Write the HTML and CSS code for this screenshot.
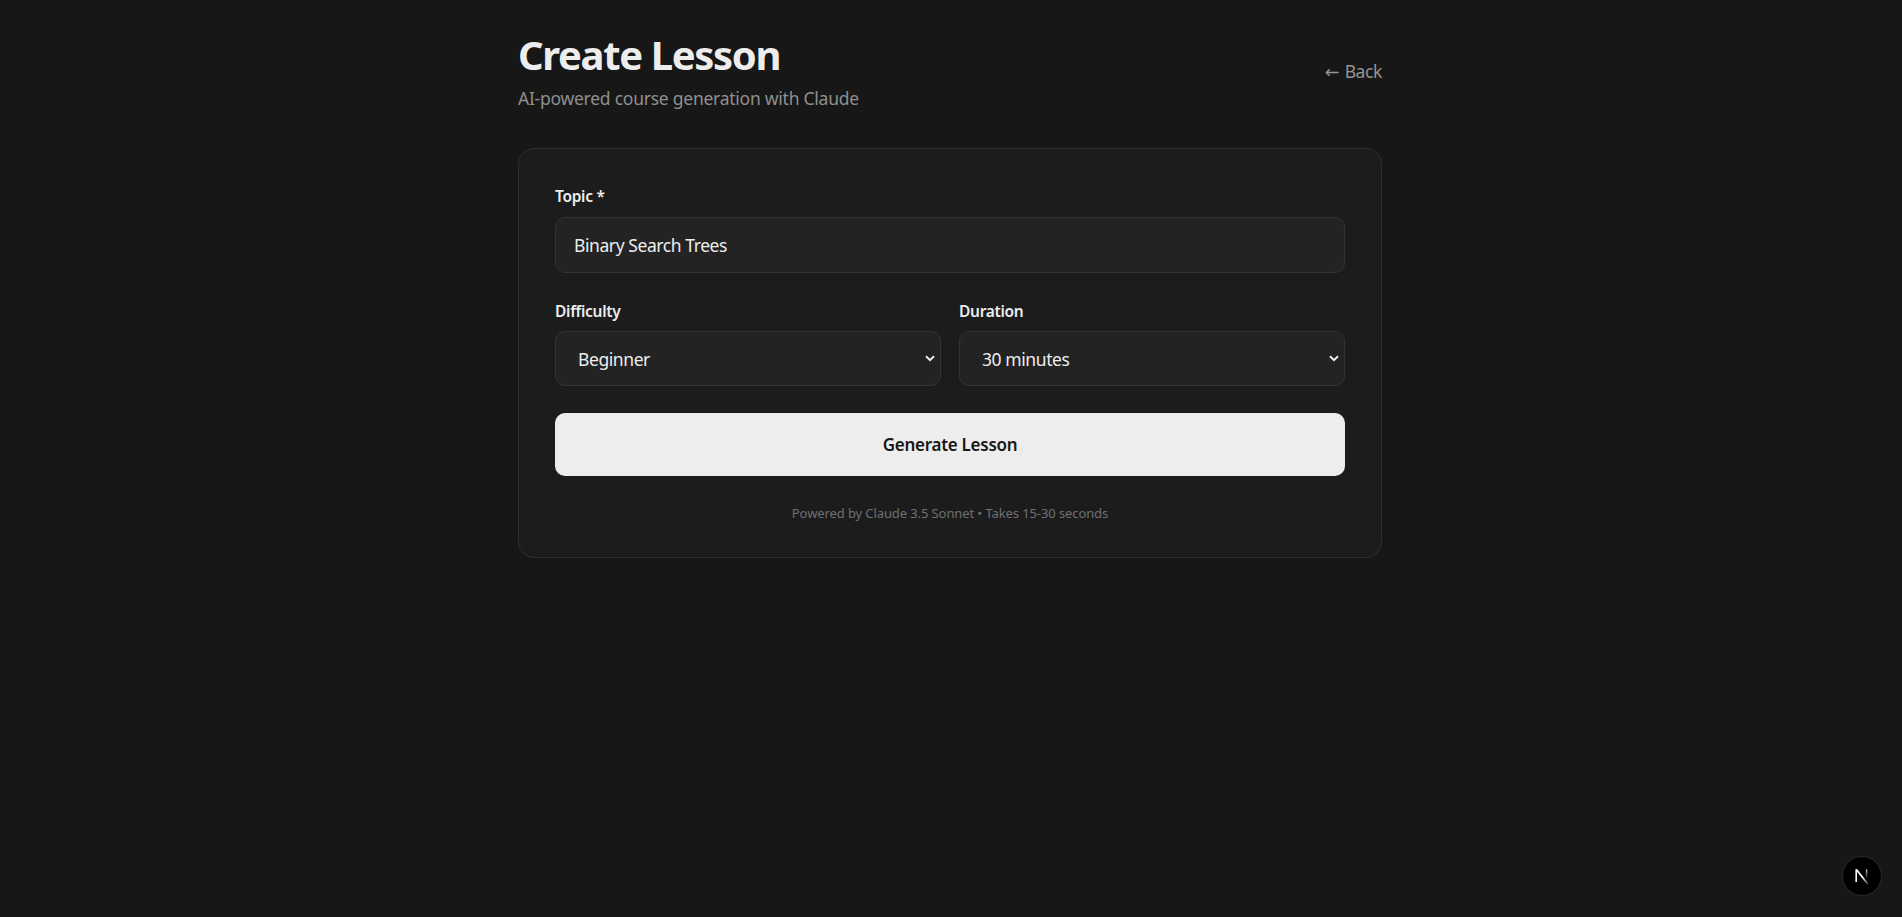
FILE: index.html
```html
<!DOCTYPE html>
<html lang="en">
<head>
<meta charset="utf-8">
<title>Create Lesson</title>
<link rel="stylesheet" href="styles.css">
</head>
<body>
<main class="page">
  <header class="head">
    <div class="head-text">
      <h1 class="title">Create Lesson</h1>
      <p class="subtitle">AI-powered course generation with Claude</p>
    </div>
    <a class="back" href="#"><span class="back-arrow">←</span> Back</a>
  </header>
  <form class="card">
    <div class="field">
      <label class="label" for="topic">Topic *</label>
      <input class="control text-input" id="topic" type="text" value="Binary Search Trees">
    </div>
    <div class="row">
      <div class="field">
        <label class="label" for="difficulty">Difficulty</label>
        <select class="control select" id="difficulty"><option>Beginner</option><option>Intermediate</option><option>Advanced</option></select>
      </div>
      <div class="field">
        <label class="label" for="duration">Duration</label>
        <select class="control select" id="duration"><option>30 minutes</option><option>45 minutes</option><option>60 minutes</option></select>
      </div>
    </div>
    <button class="submit" type="button">Generate Lesson</button>
    <p class="note">Powered by Claude 3.5 Sonnet • Takes 15-30 seconds</p>
  </form>
</main>
<div class="next-badge" aria-label="Next.js">
  <svg width="20" height="20" viewBox="0 0 20 20" fill="none">
    <defs>
      <linearGradient id="n-diag" x1="4" y1="3" x2="16" y2="18" gradientUnits="userSpaceOnUse">
        <stop offset="0.55" stop-color="#fff"/>
        <stop offset="1" stop-color="#fff" stop-opacity="0.25"/>
      </linearGradient>
      <linearGradient id="n-stem" x1="0" y1="3" x2="0" y2="12" gradientUnits="userSpaceOnUse">
        <stop offset="0" stop-color="#fff" stop-opacity="0.8"/>
        <stop offset="1" stop-color="#fff" stop-opacity="0.1"/>
      </linearGradient>
    </defs>
    <path d="M4.2 3.4V16" stroke="#fff" stroke-width="1.6"/>
    <path d="M4.2 3.4L15.8 18" stroke="url(#n-diag)" stroke-width="1.7"/>
    <path d="M14.6 3.4V12" stroke="url(#n-stem)" stroke-width="1.5"/>
  </svg>
</div>
</body>
</html>
```
FILE: styles.css
```css
* { box-sizing: border-box; }
html, body { margin: 0; height: 100%; }
body {
  background: #171717;
  color: #ededed;
  font-family: "Noto Sans", "Open Sans", sans-serif;
  overflow: hidden;
}
.page {
  width: 864px;
  margin-left: 518px;
  padding-top: 31px;
}
.head {
  display: flex;
  justify-content: space-between;
  align-items: center;
  margin-bottom: 37px;
}
.title {
  margin: 0;
  font-size: 40px;
  line-height: 48px;
  font-weight: 700;
  letter-spacing: -1.35px;
  color: #ededed;
}
.subtitle {
  margin: 6px 0 0;
  font-size: 17.5px;
  line-height: 26px;
  letter-spacing: -0.25px;
  color: #8f8f8f;
}
.back {
  font-size: 17.5px;
  color: #949494;
  text-decoration: none;
  letter-spacing: -0.4px;
}
.back-arrow { font-family: "DejaVu Sans", sans-serif; letter-spacing: 1px; }
.card {
  height: 410px;
  background: #1c1c1c;
  border: 1px solid #2e2e2e;
  border-radius: 16px;
  padding: 36px;
}
.field { display: flex; flex-direction: column; min-width: 0; }
.label {
  font-size: 15.5px;
  line-height: 22px;
  font-weight: 600;
  letter-spacing: -0.3px;
  color: #ededed;
  margin-bottom: 10px;
}
.row .label { margin-bottom: 9px; }
.control {
  width: 100%;
  background-color: #232323;
  border: 1px solid #333;
  border-radius: 10px;
  color: #ededed;
  font-family: inherit;
  font-size: 17.5px;
  letter-spacing: -0.42px;
  outline: none;
}
.text-input { height: 56px; padding: 0 18px 1px; }
.select {
  height: 55px;
  padding: 0 22px;
  appearance: none;
  -webkit-appearance: none;
  background-image: url("data:image/svg+xml,%3Csvg xmlns='http://www.w3.org/2000/svg' width='10' height='7' viewBox='0 0 10 7'%3E%3Cpath d='M1 1.2l4 4 4-4' fill='none' stroke='%23ededed' stroke-width='2'/%3E%3C/svg%3E");
  background-repeat: no-repeat;
  background-position: right 5px center;
  background-size: 10px 7px;
}
.row {
  display: grid;
  grid-template-columns: 1fr 1fr;
  gap: 18px;
  margin-top: 27px;
}
.submit {
  display: block;
  width: 100%;
  height: 63px;
  margin-top: 27px;
  background: #ededed;
  color: #171717;
  border: 0;
  border-radius: 10px;
  font-family: inherit;
  font-size: 17px;
  font-weight: 600;
  letter-spacing: -0.27px;
}
.note {
  margin: 27px 0 0;
  text-align: center;
  font-size: 13px;
  line-height: 20px;
  letter-spacing: -0.1px;
  color: #707070;
}
.next-badge {
  position: fixed;
  right: 20px;
  bottom: 21px;
  width: 40px;
  height: 40px;
  border-radius: 50%;
  background: #000;
  border: 1px solid #2a2a2a;
  display: flex;
  align-items: center;
  justify-content: center;
}
```
